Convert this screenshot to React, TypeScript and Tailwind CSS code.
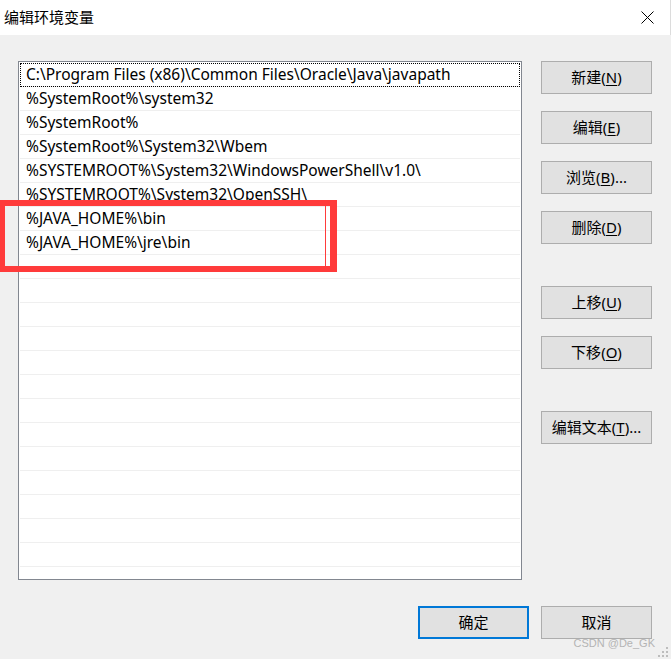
import React from 'react';

const paths = [
  'C:\\Program Files (x86)\\Common Files\\Oracle\\Java\\javapath',
  '%SystemRoot%\\system32',
  '%SystemRoot%',
  '%SystemRoot%\\System32\\Wbem',
  '%SYSTEMROOT%\\System32\\WindowsPowerShell\\v1.0\\',
  '%SYSTEMROOT%\\System32\\OpenSSH\\',
  '%JAVA_HOME%\\bin',
  '%JAVA_HOME%\\jre\\bin',
];

const font = "font-['Noto_Sans','Noto_Sans_CJK_SC',sans-serif]";

function WinButton({
  label,
  hotkey,
  suffix = '',
  primary = false,
  className = '',
}: {
  label: string;
  hotkey?: string;
  suffix?: string;
  primary?: boolean;
  className?: string;
}) {
  return (
    <button
      className={`h-[33px] w-[111px] bg-[#e1e1e1] text-[15px] leading-none text-black flex items-center justify-center ${
        primary ? 'border-2 border-[#0078d7]' : 'border border-[#adadad]'
      } ${className}`}
    >
      {label}
      {hotkey && (
        <>
          (<span className="underline underline-offset-2">{hotkey}</span>)
        </>
      )}
      {suffix}
    </button>
  );
}

export default function App() {
  const rows = [...paths, ...Array(14).fill('')];

  return (
    <div className={`relative w-[671px] h-[659px] bg-[#f0f0f0] overflow-hidden flex flex-col ${font}`}>
      {/* title bar */}
      <div className="h-[35px] bg-white flex items-center justify-between border-r border-[#dcdcdc] shrink-0">
        <span className="pl-[4px] text-[15px] text-black">编辑环境变量</span>
        <svg width="13" height="13" viewBox="0 0 13 13" className="mr-[16px]">
          <path d="M0.5 0.5 L12.5 12.5 M12.5 0.5 L0.5 12.5" stroke="#000" strokeWidth="1" />
        </svg>
      </div>

      <div className="flex flex-col pl-[18px] pt-[26px]">
        <div className="flex">
          {/* list */}
          <div className="w-[504px] h-[519px] bg-white border border-[#828790] p-px overflow-hidden">
            {rows.map((r, i) => (
              <div
                key={i}
                className={`h-[24px] shrink-0 border-b border-[#efefef] pl-[6px] flex items-center text-[15.5px] text-black whitespace-nowrap ${
                  i === 0 ? 'outline-1 outline-dotted outline-black -outline-offset-1' : ''
                }`}
              >
                {r}
              </div>
            ))}
          </div>

          {/* side buttons */}
          <div className="ml-[19px] flex flex-col">
            <WinButton label="新建" hotkey="N" />
            <WinButton label="编辑" hotkey="E" className="mt-[17px]" />
            <WinButton label="浏览" hotkey="B" suffix="..." className="mt-[17px]" />
            <WinButton label="删除" hotkey="D" className="mt-[17px]" />
            <WinButton label="上移" hotkey="U" className="mt-[42px]" />
            <WinButton label="下移" hotkey="O" className="mt-[17px]" />
            <WinButton label="编辑文本" hotkey="T" suffix="..." className="mt-[42px]" />
          </div>
        </div>

        <div className="flex justify-end pr-[19px] mt-[26px] gap-[12px]">
          <WinButton label="确定" primary />
          <WinButton label="取消" />
        </div>
      </div>

      {/* annotation box */}
      <div className="absolute left-0 top-[200px] w-[337px] h-[72px] border-[6px] border-l-[5px] border-r-[7px] border-[#ff3b3b]">
        <div className="absolute right-[4px] top-0 bottom-0 w-px bg-[#ff3b3b]" />
      </div>

      {/* watermark */}
      <span className="absolute right-[16px] bottom-[10px] text-[11px] leading-none text-[#b4b4b4] font-['Liberation_Sans',sans-serif]">
        CSDN @De_GK
      </span>

      {/* size grip */}
      <svg width="12" height="12" viewBox="0 0 12 12" className="absolute right-[2px] bottom-[1px]">
        {[
          [8, 0],
          [4, 4],
          [8, 4],
          [0, 8],
          [4, 8],
          [8, 8],
        ].map(([x, y], i) => (
          <rect key={i} x={x + 1} y={y + 1} width="2" height="2" fill="#bdbdbd" />
        ))}
      </svg>
    </div>
  );
}
